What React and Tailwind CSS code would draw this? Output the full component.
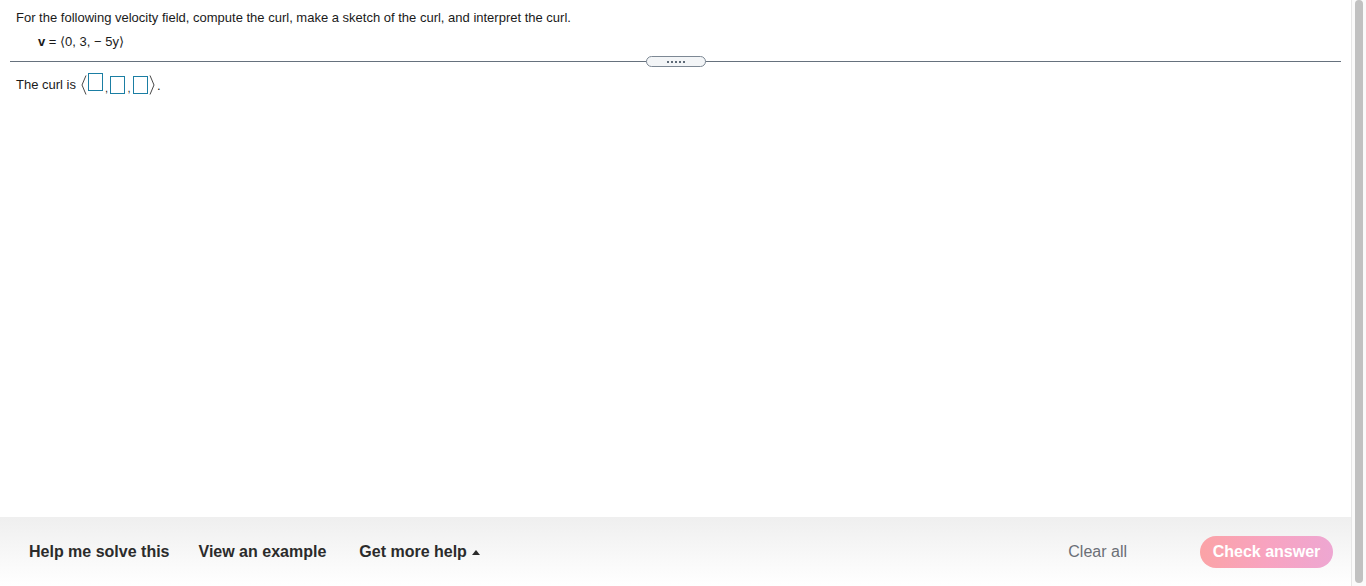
import React from "react";

function Box() {
  return <span className="inline-block w-[15px] h-[18px] border-[1.5px] border-[#1b7ea3] bg-white" />;
}

function Bracket({ right }) {
  return (
    <svg width="6" height="20" viewBox="0 0 6 20" className="block">
      {right ? (
        <polyline points="1,0.5 5,10 1,19.5" fill="none" stroke="#333" strokeWidth="0.9" />
      ) : (
        <polyline points="5,0.5 1,10 5,19.5" fill="none" stroke="#333" strokeWidth="0.9" />
      )}
    </svg>
  );
}

export default function App() {
  return (
    <div className="flex h-[586px] w-full overflow-hidden bg-white text-[#222]" style={{ fontFamily: '"Liberation Sans", Arial, sans-serif' }}>
      <div className="flex-1 flex flex-col min-w-0">
        <div className="flex-1 flex flex-col">
          <div className="pt-[10px] px-[16px] text-[13px] leading-[15px] text-[#1a1a1a]">
            For the following velocity field, compute the curl, make a sketch of the curl, and interpret the curl.
          </div>
          <div className="pt-[9px] pl-[38px] text-[13px] leading-[15px] text-[#1a1a1a]">
            <span className="font-bold">v</span> = ⟨0, 3, − 5y⟩
          </div>
          <div className="relative mx-[10px] mt-[7px] h-[11px] flex items-center">
            <div className="w-full h-px bg-[#66717d]" />
            <div className="absolute left-1/2 -translate-x-1/2 top-0 w-[60px] h-[11px] rounded-full border border-[#7d8894] bg-[#f3f5f7] flex items-center justify-center gap-[2px]">
              <span className="w-[2px] h-[2px] bg-[#5f6b78]" />
              <span className="w-[2px] h-[2px] bg-[#5f6b78]" />
              <span className="w-[2px] h-[2px] bg-[#5f6b78]" />
              <span className="w-[2px] h-[2px] bg-[#5f6b78]" />
              <span className="w-[2px] h-[2px] bg-[#5f6b78]" />
            </div>
          </div>
          <div className="mt-[6px] pl-[16px] flex items-center text-[13px] text-[#1a1a1a]">
            <span className="mr-[5px]">The curl is</span>
            <Bracket />
            <span className="ml-[1px]"><Box /></span>
            <span className="w-[7px] text-[11px] leading-none self-end mb-[3px] text-center">,</span>
            <Box />
            <span className="w-[8px] text-[11px] leading-none self-end mb-[3px] text-center">,</span>
            <Box />
            <span className="ml-[1px]"><Bracket right /></span>
            <span className="ml-[2px] self-end mb-[1px]">.</span>
          </div>
        </div>
        <div className="h-[69px] bg-gradient-to-b from-[#efefef] to-white flex items-center">
          <div className="flex items-center pl-[29px] text-[16px] font-bold text-[#2b2b2b]">
            <span>Help me solve this</span>
            <span className="ml-[29px]">View an example</span>
            <span className="ml-[33px] flex items-center">
              Get more help
              <svg width="8" height="5" viewBox="0 0 8 5" className="ml-[5px] mt-[1px]">
                <polygon points="0,5 8,5 4,0" fill="#2b2b2b" />
              </svg>
            </span>
          </div>
          <div className="flex-1" />
          <span className="text-[16px] text-[#6b6f76] mr-[73px]">Clear all</span>
          <div className="w-[133px] h-[32px] rounded-full bg-gradient-to-r from-[#fba3a6] via-[#f8a3c0] to-[#eea7d2] flex items-center justify-center text-white font-bold text-[16px] mr-[18px]">
            Check answer
          </div>
        </div>
      </div>
      <div className="w-[15px] h-full border-l border-[#e6e6e6] bg-[#fafafa] flex justify-center">
        <div className="w-[8px] h-[583px] rounded-full bg-[#c1c1c1]" />
      </div>
    </div>
  );
}
